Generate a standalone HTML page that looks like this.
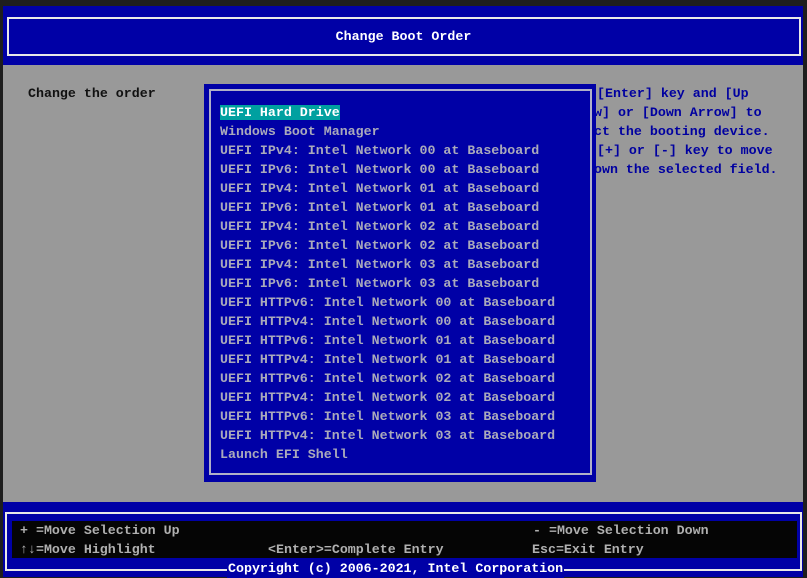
<!DOCTYPE html>
<html><head><meta charset="utf-8"><style>
*{margin:0;padding:0;box-sizing:border-box}
body{width:807px;height:577px;background:#1e1e1e;position:relative;overflow:hidden;font-family:"Liberation Mono","DejaVu Sans Mono",monospace;font-size:13.3px;font-weight:bold}
.a{position:absolute;white-space:pre;line-height:19px}
</style></head><body>
<div class="a" style="left:3px;top:6px;width:800px;height:59px;background:#0000a6"></div>
<div class="a" style="left:7px;top:17px;width:794px;height:39px;border:2px solid #e8e8e8"></div>
<div class="a" style="left:0;top:27px;width:807px;text-align:center;color:#fff">Change Boot Order</div>
<div class="a" style="left:3px;top:65px;width:800px;height:437px;background:#999"></div>
<div class="a" style="left:28px;top:84px;color:#111">Change the order</div>
<div class="a" style="left:597px;top:84px;color:#0000a0">[Enter] key and [Up</div>
<div class="a" style="left:594px;top:103px;color:#0000a0">w] or [Down Arrow] to</div>
<div class="a" style="left:594px;top:122px;color:#0000a0">ct the booting device.</div>
<div class="a" style="left:597px;top:141px;color:#0000a0">[+] or [-] key to move</div>
<div class="a" style="left:594px;top:160px;color:#0000a0">own the selected field.</div>
<div class="a" style="left:204px;top:84px;width:392px;height:398px;background:#0000a6"></div>
<div class="a" style="left:209px;top:89px;width:383px;height:386px;border:2px solid #b0b0c8"></div>
<div class="a" style="left:220px;top:103px;color:#aab;"><span style="background:#00a0a0;color:#fff">UEFI Hard Drive</span>
Windows Boot Manager
UEFI IPv4: Intel Network 00 at Baseboard
UEFI IPv6: Intel Network 00 at Baseboard
UEFI IPv4: Intel Network 01 at Baseboard
UEFI IPv6: Intel Network 01 at Baseboard
UEFI IPv4: Intel Network 02 at Baseboard
UEFI IPv6: Intel Network 02 at Baseboard
UEFI IPv4: Intel Network 03 at Baseboard
UEFI IPv6: Intel Network 03 at Baseboard
UEFI HTTPv6: Intel Network 00 at Baseboard
UEFI HTTPv4: Intel Network 00 at Baseboard
UEFI HTTPv6: Intel Network 01 at Baseboard
UEFI HTTPv4: Intel Network 01 at Baseboard
UEFI HTTPv6: Intel Network 02 at Baseboard
UEFI HTTPv4: Intel Network 02 at Baseboard
UEFI HTTPv6: Intel Network 03 at Baseboard
UEFI HTTPv4: Intel Network 03 at Baseboard
Launch EFI Shell</div>
<div class="a" style="left:3px;top:502px;width:800px;height:75px;background:#0000a6"></div>
<div class="a" style="left:5px;top:512px;width:797px;height:59px;border:2px solid #e8e8e8"></div>
<div class="a" style="left:12px;top:521px;width:785px;height:37px;background:#050505"></div>
<div class="a" style="left:20px;top:521px;color:#b0b0b0">+ =Move Selection Up</div>
<div class="a" style="left:533px;top:521px;color:#b0b0b0">- =Move Selection Down</div>
<div class="a" style="left:20px;top:540px;color:#b0b0b0">↑↓=Move Highlight</div>
<div class="a" style="left:268px;top:540px;color:#b0b0b0">&lt;Enter&gt;=Complete Entry</div>
<div class="a" style="left:532px;top:540px;color:#b0b0b0">Esc=Exit Entry</div>
<div class="a" style="left:227px;top:559px;color:#fff;background:#0000a6;padding:0 1px">Copyright (c) 2006-2021, Intel Corporation</div>
</body></html>
